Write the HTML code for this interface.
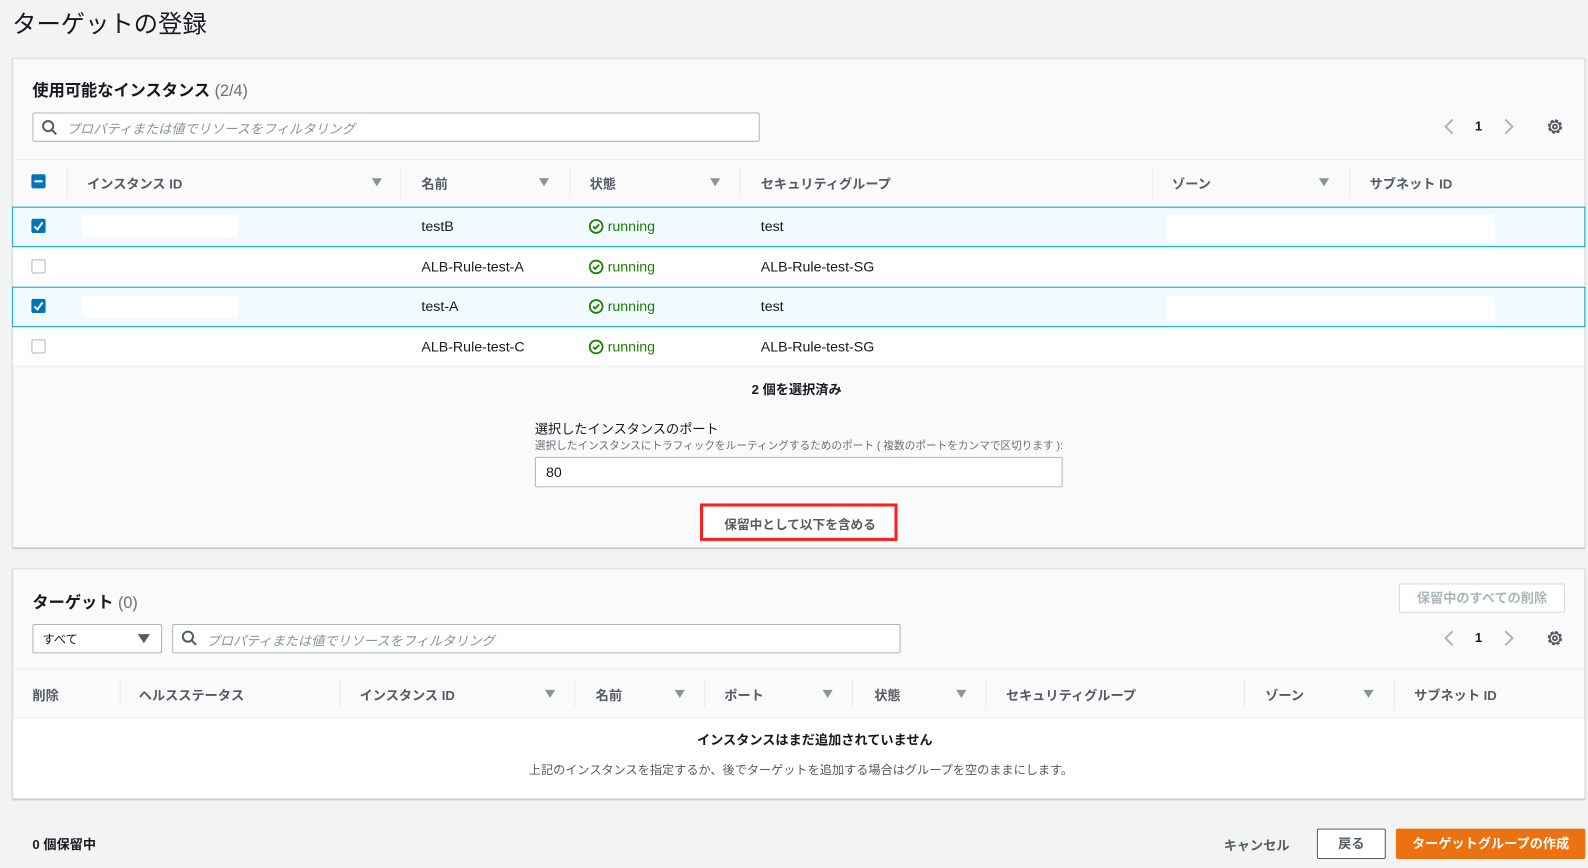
<!DOCTYPE html>
<html><head><meta charset="utf-8">
<style>
*{box-sizing:border-box;margin:0;padding:0}
html,body{width:1588px;height:868px;overflow:hidden}
body{background:#f2f3f3;font-family:"Liberation Sans","Noto Sans CJK JP",sans-serif;color:#16191f;position:relative;font-size:13px}
#w{position:absolute;left:0;top:0;width:1588px;height:868px;transform:scale(1.013);transform-origin:0 0}
.a{position:absolute;white-space:nowrap}
.panel{position:absolute;left:12px;width:1553px;background:#fafafa;border:1px solid #d5dbdb;box-shadow:0 1px 1px rgba(0,28,36,.3)}
.b{font-weight:bold}
.h{font-weight:bold;color:#545b64;font-size:13px}
.ln{position:absolute;background:#eaeded;height:1px}
.vd{position:absolute;width:1px;height:30px;background:#eaeded}
.tri{position:absolute;width:0;height:0;border-left:5px solid transparent;border-right:5px solid transparent;border-top:8px solid #879596}
.inp{position:absolute;background:#fff;border:1px solid #aab7b8;border-radius:2px}
.ph{color:#879596;font-style:italic;font-size:13px}
.cb{position:absolute;width:14px;height:14px;border-radius:2px}
.run{color:#1d8102;font-size:14px}
.wb{position:absolute;background:#fff}
.btn{position:absolute;border:1px solid #545b64;border-radius:2px;background:#fff;font-weight:bold;color:#545b64;text-align:center}
.t{font-size:14px}
</style></head><body><div id="w">
<div class="a" style="left:12px;top:4px;font-size:24px;color:#16191f">ターゲットの登録</div>

<div class="panel" style="top:57px;height:484px"></div>
<div class="a b" style="left:32px;top:76px;font-size:16px">使用可能なインスタンス <span style="color:#687078;font-weight:normal">(2/4)</span></div>
<div class="inp" style="left:32px;top:111px;width:718px;height:29px"></div>
<svg class="a" style="left:41px;top:118px" width="16" height="16" viewBox="0 0 16 16"><circle cx="6.5" cy="6.5" r="5" fill="none" stroke="#545b64" stroke-width="2"/><path d="M10 10l4.5 4.5" stroke="#545b64" stroke-width="2"/></svg>
<div class="a ph" style="left:66px;top:117px">プロパティまたは値でリソースをフィルタリング</div>
<svg class="a" style="left:1424px;top:116px" width="14" height="18"><path d="M10 2L3 9l7 7" fill="none" stroke="#aab7b8" stroke-width="2"/></svg>
<div class="a b" style="left:1456px;top:117px">1</div>
<svg class="a" style="left:1482px;top:116px" width="14" height="18"><path d="M4 2l7 7-7 7" fill="none" stroke="#aab7b8" stroke-width="2"/></svg>
<svg class="a" style="left:1526px;top:116px" width="18" height="18" viewBox="0 0 18 18"><circle cx="9" cy="9" r="6" fill="none" stroke="#545b64" stroke-width="2.2" stroke-dasharray="3 1.7"/><circle cx="9" cy="9" r="5" fill="none" stroke="#545b64" stroke-width="1.5"/><circle cx="9" cy="9" r="2" fill="none" stroke="#545b64" stroke-width="1.8"/></svg>

<div class="ln" style="left:13px;top:157px;width:1551px"></div>
<div class="cb" style="left:31px;top:172px;background:#0073bb"></div><div class="a" style="left:34px;top:178px;width:8px;height:2px;background:#fff"></div>
<div class="vd" style="left:66px;top:165px"></div>
<div class="a h" style="left:86px;top:171px">インスタンス ID</div><div class="tri" style="left:367px;top:176px"></div>
<div class="vd" style="left:395px;top:165px"></div>
<div class="a h" style="left:416px;top:171px">名前</div><div class="tri" style="left:532px;top:176px"></div>
<div class="vd" style="left:562px;top:165px"></div>
<div class="a h" style="left:582px;top:171px">状態</div><div class="tri" style="left:701px;top:176px"></div>
<div class="vd" style="left:730px;top:165px"></div>
<div class="a h" style="left:751px;top:171px">セキュリティグループ</div>
<div class="vd" style="left:1137px;top:165px"></div>
<div class="a h" style="left:1157px;top:171px">ゾーン</div><div class="tri" style="left:1302px;top:176px"></div>
<div class="vd" style="left:1332px;top:165px"></div>
<div class="a h" style="left:1352px;top:171px">サブネット ID</div>

<div class="a" style="left:13px;top:204px;width:1551px;height:158px;background:#fff"></div>
<div class="a" style="left:12px;top:204px;width:1553px;height:40px;background:#f1faff;border:1px solid #00a1c9"></div>
<div class="a" style="left:12px;top:283px;width:1553px;height:40px;background:#f1faff;border:1px solid #00a1c9"></div>
<div class="ln" style="left:13px;top:361px;width:1551px"></div>
<div class="wb" style="left:81px;top:212px;width:154px;height:22px"></div>
<div class="wb" style="left:81px;top:292px;width:154px;height:22px"></div>
<div class="wb" style="left:1152px;top:212px;width:324px;height:28px"></div>
<div class="wb" style="left:1152px;top:292px;width:324px;height:26px"></div>

<div class="cb" style="left:31px;top:216px;background:#0073bb"></div>
<svg class="a" style="left:31px;top:216px" width="14" height="14"><path d="M3 7.5l3 3 5-7" fill="none" stroke="#fff" stroke-width="2"/></svg>
<div class="cb" style="left:31px;top:256px;border:1px solid #aab7b8;background:#fff"></div>
<div class="cb" style="left:31px;top:295px;background:#0073bb"></div>
<svg class="a" style="left:31px;top:295px" width="14" height="14"><path d="M3 7.5l3 3 5-7" fill="none" stroke="#fff" stroke-width="2"/></svg>
<div class="cb" style="left:31px;top:335px;border:1px solid #aab7b8;background:#fff"></div>

<div class="a t" style="left:416px;top:215px">testB</div>
<div class="a t" style="left:416px;top:255px">ALB-Rule-test-A</div>
<div class="a t" style="left:416px;top:294px">test-A</div>
<div class="a t" style="left:416px;top:334px">ALB-Rule-test-C</div>
<div class="a t" style="left:751px;top:215px">test</div>
<div class="a t" style="left:751px;top:255px">ALB-Rule-test-SG</div>
<div class="a t" style="left:751px;top:294px">test</div>
<div class="a t" style="left:751px;top:334px">ALB-Rule-test-SG</div>
<div class="a run" style="left:581px;top:215px"><svg width="15" height="15" style="vertical-align:-3px"><circle cx="7.5" cy="7.5" r="6.3" fill="none" stroke="#1d8102" stroke-width="1.8"/><path d="M4.5 7.5l2 2 4-4" fill="none" stroke="#1d8102" stroke-width="1.8"/></svg> running</div>
<div class="a run" style="left:581px;top:255px"><svg width="15" height="15" style="vertical-align:-3px"><circle cx="7.5" cy="7.5" r="6.3" fill="none" stroke="#1d8102" stroke-width="1.8"/><path d="M4.5 7.5l2 2 4-4" fill="none" stroke="#1d8102" stroke-width="1.8"/></svg> running</div>
<div class="a run" style="left:581px;top:294px"><svg width="15" height="15" style="vertical-align:-3px"><circle cx="7.5" cy="7.5" r="6.3" fill="none" stroke="#1d8102" stroke-width="1.8"/><path d="M4.5 7.5l2 2 4-4" fill="none" stroke="#1d8102" stroke-width="1.8"/></svg> running</div>
<div class="a run" style="left:581px;top:334px"><svg width="15" height="15" style="vertical-align:-3px"><circle cx="7.5" cy="7.5" r="6.3" fill="none" stroke="#1d8102" stroke-width="1.8"/><path d="M4.5 7.5l2 2 4-4" fill="none" stroke="#1d8102" stroke-width="1.8"/></svg> running</div>

<div class="a b" style="left:742px;top:374px">2 個を選択済み</div>
<div class="a" style="left:528px;top:413px">選択したインスタンスのポート</div>
<div class="a" style="left:528px;top:432px;font-size:10.5px;color:#687078">選択したインスタンスにトラフィックをルーティングするためのポート ( 複数のポートをカンマで区切ります ):</div>
<div class="inp" style="left:528px;top:451px;width:521px;height:30px"></div>
<div class="a t" style="left:539px;top:458px">80</div>
<div class="a" style="left:691px;top:497px;width:195px;height:37px;border:3px solid #ff1f1f;background:#fff"></div>
<div class="a b" style="left:715px;top:507px;color:#545b64;font-size:12.5px">保留中として以下を含める</div>

<div class="panel" style="top:561px;height:228px"></div>
<div class="a b" style="left:32px;top:581px;font-size:16px">ターゲット <span style="color:#687078;font-weight:normal">(0)</span></div>
<div class="btn" style="left:1381px;top:576px;width:164px;height:29px;border-color:#d5dbdb;color:#aab7b8;line-height:27px;font-size:13px">保留中のすべての削除</div>
<div class="inp" style="left:32px;top:616px;width:128px;height:29px"></div>
<div class="a" style="left:42px;top:622px;font-size:12px">すべて</div>
<div class="a" style="left:136px;top:626px;border-left:6px solid transparent;border-right:6px solid transparent;border-top:9px solid #545b64"></div>
<div class="inp" style="left:170px;top:616px;width:719px;height:29px"></div>
<svg class="a" style="left:179px;top:622px" width="16" height="16" viewBox="0 0 16 16"><circle cx="6.5" cy="6.5" r="5" fill="none" stroke="#545b64" stroke-width="2"/><path d="M10 10l4.5 4.5" stroke="#545b64" stroke-width="2"/></svg>
<div class="a ph" style="left:204px;top:622px">プロパティまたは値でリソースをフィルタリング</div>
<svg class="a" style="left:1424px;top:621px" width="14" height="18"><path d="M10 2L3 9l7 7" fill="none" stroke="#aab7b8" stroke-width="2"/></svg>
<div class="a b" style="left:1456px;top:622px">1</div>
<svg class="a" style="left:1482px;top:621px" width="14" height="18"><path d="M4 2l7 7-7 7" fill="none" stroke="#aab7b8" stroke-width="2"/></svg>
<svg class="a" style="left:1526px;top:621px" width="18" height="18" viewBox="0 0 18 18"><circle cx="9" cy="9" r="6" fill="none" stroke="#545b64" stroke-width="2.2" stroke-dasharray="3 1.7"/><circle cx="9" cy="9" r="5" fill="none" stroke="#545b64" stroke-width="1.5"/><circle cx="9" cy="9" r="2" fill="none" stroke="#545b64" stroke-width="1.8"/></svg>
<div class="ln" style="left:13px;top:660px;width:1551px"></div>
<div class="a h" style="left:32px;top:676px">削除</div>
<div class="vd" style="left:118px;top:669px"></div>
<div class="a h" style="left:137px;top:676px">ヘルスステータス</div>
<div class="vd" style="left:335px;top:669px"></div>
<div class="a h" style="left:355px;top:676px">インスタンス ID</div><div class="tri" style="left:538px;top:681px"></div>
<div class="vd" style="left:567px;top:669px"></div>
<div class="a h" style="left:588px;top:676px">名前</div><div class="tri" style="left:666px;top:681px"></div>
<div class="vd" style="left:695px;top:669px"></div>
<div class="a h" style="left:715px;top:676px">ポート</div><div class="tri" style="left:812px;top:681px"></div>
<div class="vd" style="left:841px;top:669px"></div>
<div class="a h" style="left:863px;top:676px">状態</div><div class="tri" style="left:944px;top:681px"></div>
<div class="vd" style="left:973px;top:669px"></div>
<div class="a h" style="left:993px;top:676px">セキュリティグループ</div>
<div class="vd" style="left:1228px;top:669px"></div>
<div class="a h" style="left:1249px;top:676px">ゾーン</div><div class="tri" style="left:1346px;top:681px"></div>
<div class="vd" style="left:1376px;top:669px"></div>
<div class="a h" style="left:1396px;top:676px">サブネット ID</div>
<div class="a" style="left:13px;top:708px;width:1551px;height:80px;background:#fff;border-top:1px solid #eaeded"></div>
<div class="a b" style="left:688px;top:720px">インスタンスはまだ追加されていません</div>
<div class="a" style="left:522px;top:751px;font-size:12px;color:#545b64">上記のインスタンスを指定するか、後でターゲットを追加する場合はグループを空のままにします。</div>

<div class="a b" style="left:32px;top:823px">0 個保留中</div>
<div class="a b" style="left:1208px;top:824px;color:#545b64">キャンセル</div>
<div class="btn" style="left:1300px;top:818px;width:68px;height:30px;line-height:28px;color:#545b64">戻る</div>
<div class="btn" style="left:1378px;top:818px;width:187px;height:30px;line-height:28px;background:#ec7211;border-color:#ec7211;color:#fff">ターゲットグループの作成</div>
</div></body></html>
